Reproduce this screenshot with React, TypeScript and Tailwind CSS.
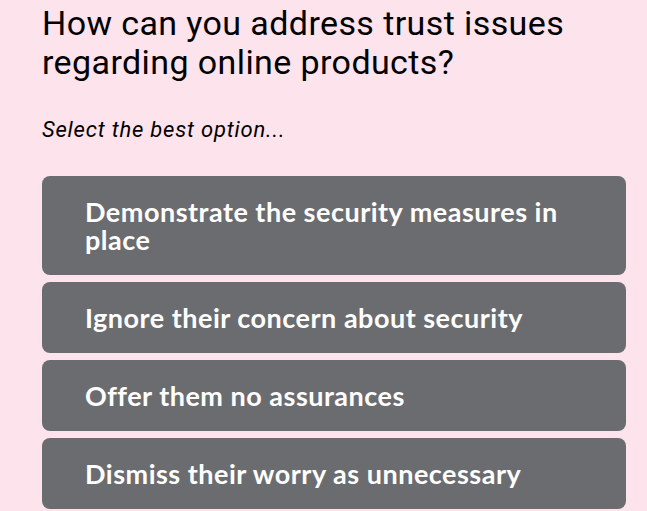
import React from 'react';

const options = [
  'Demonstrate the security measures in place',
  'Ignore their concern about security',
  'Offer them no assurances',
  'Dismiss their worry as unnecessary',
];

const App = () => {
  return (
    <div className="min-h-[511px] w-full bg-[#fde4ec] pl-[42px] pr-[21px] pt-[4px]">
      <h1 className="font-['Roboto',sans-serif] text-[34px] leading-[39px] tracking-[0.4px] text-black">
        How can you address trust issues regarding online products?
      </h1>
      <p className="mt-[34px] font-['Roboto',sans-serif] text-[22px] italic leading-[28px] tracking-[0.8px] text-black">
        Select the best option...
      </p>
      <div className="mt-[32px] flex flex-col gap-[7px]">
        {options.map((opt) => (
          <button
            key={opt}
            className="w-full rounded-[8px] bg-[#6b6c70] px-[43px] py-[21.5px] text-left font-['Lato',sans-serif] text-[27px] font-bold leading-[28px] tracking-[0.5px] text-white"
          >
            {opt}
          </button>
        ))}
      </div>
    </div>
  );
};

export default App;
